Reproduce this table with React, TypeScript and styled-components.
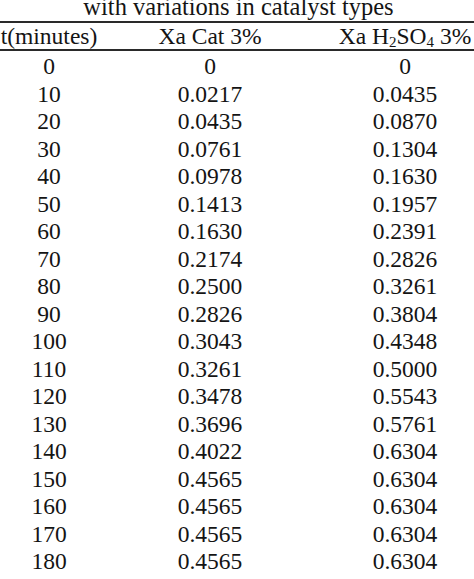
import React from "react";
import styled, { createGlobalStyle } from "styled-components";

const Global = createGlobalStyle`
  html, body { margin: 0; padding: 0; background: #ffffff; }
  body { width: 474px; height: 579px; overflow: hidden; }
`;

const Page = styled.div`
  width: 474px;
  height: 579px;
  overflow: hidden;
  font-family: "Liberation Serif", "Times New Roman", serif;
  font-size: 23.5px;
  color: #141414;
`;

const Caption = styled.div`
  width: 477px;
  text-align: center;
  font-size: 24.5px;
  line-height: 14px;
  height: 21px;
  white-space: nowrap;
`;

const Grid = styled.div`
  display: grid;
  grid-template-columns: 98px 224px 166px;
  width: 488px;
`;

const Head = styled.div`
  grid-column: 1 / -1;
  display: grid;
  grid-template-columns: subgrid;
  border-top: 2px solid #2a2a2a;
  border-bottom: 2px solid #2a2a2a;
  height: 30px;
  line-height: 25px;
  padding-top: 1px;
  box-sizing: border-box;
`;

const Body = styled.div`
  grid-column: 1 / -1;
  display: grid;
  grid-template-columns: subgrid;
  padding-top: 2.3px;
`;

const Cell = styled.div`
  text-align: center;
  white-space: nowrap;
  line-height: 27.5px;
  height: 27.5px;
`;

const HeadCell = styled.div`
  text-align: center;
  white-space: nowrap;
`;

const Sub = styled.sub`
  font-size: 15px;
  line-height: 0;
  vertical-align: -3px;
`;

const rows: [string, string, string][] = [
  ["0", "0", "0"],
  ["10", "0.0217", "0.0435"],
  ["20", "0.0435", "0.0870"],
  ["30", "0.0761", "0.1304"],
  ["40", "0.0978", "0.1630"],
  ["50", "0.1413", "0.1957"],
  ["60", "0.1630", "0.2391"],
  ["70", "0.2174", "0.2826"],
  ["80", "0.2500", "0.3261"],
  ["90", "0.2826", "0.3804"],
  ["100", "0.3043", "0.4348"],
  ["110", "0.3261", "0.5000"],
  ["120", "0.3478", "0.5543"],
  ["130", "0.3696", "0.5761"],
  ["140", "0.4022", "0.6304"],
  ["150", "0.4565", "0.6304"],
  ["160", "0.4565", "0.6304"],
  ["170", "0.4565", "0.6304"],
  ["180", "0.4565", "0.6304"],
];

export default function App() {
  return (
    <Page>
      <Global />
      <Caption>with variations in catalyst types</Caption>
      <Grid>
        <Head>
          <HeadCell>t(minutes)</HeadCell>
          <HeadCell>Xa Cat 3%</HeadCell>
          <HeadCell>
            Xa H<Sub>2</Sub>SO<Sub>4</Sub> 3%
          </HeadCell>
        </Head>
        <Body>
          {rows.map((r) => (
            <React.Fragment key={r[0]}>
              <Cell>{r[0]}</Cell>
              <Cell>{r[1]}</Cell>
              <Cell>{r[2]}</Cell>
            </React.Fragment>
          ))}
        </Body>
      </Grid>
    </Page>
  );
}
